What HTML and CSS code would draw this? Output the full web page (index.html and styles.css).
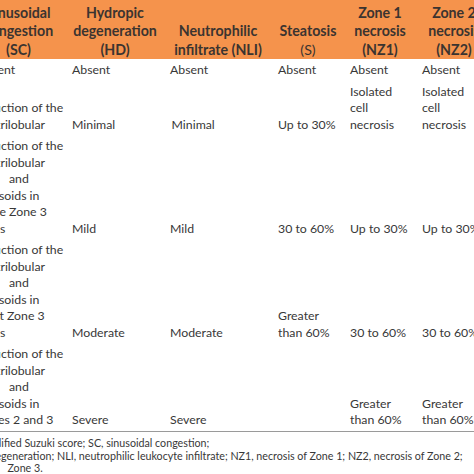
FILE: index.html
```html
<!DOCTYPE html>
<html lang="en">
<head>
<meta charset="utf-8">
<title>Modified Suzuki score</title>
<link rel="stylesheet" href="styles.css">
</head>
<body>
<div class="page">
  <table class="scores">
    <colgroup>
      <col class="c-sc"><col class="c-hd"><col class="c-nli"><col class="c-s"><col class="c-nz1"><col class="c-nz2">
    </colgroup>
    <thead>
      <tr>
        <th>Sinusoidal<br>congestion<br>(SC)</th>
        <th>Hydropic<br>degeneration<br>(HD)</th>
        <th>Neutrophilic<br>infiltrate (NLI)</th>
        <th>Steatosis<br><span class="reg">(S)</span></th>
        <th>Zone 1<br>necrosis<br>(NZ1)</th>
        <th>Zone 2<br>necrosis<br>(NZ2)</th>
      </tr>
    </thead>
    <tbody>
      <tr>
        <td>Absent</td><td>Absent</td><td>Absent</td><td>Absent</td><td>Absent</td><td>Absent</td>
      </tr>
      <tr>
        <td>Induction of the<br>centrilobular</td><td>Minimal</td><td>&#8201;Minimal</td><td>Up to 30%</td><td>Isolated<br>cell<br>necrosis</td><td>Isolated<br>cell<br>necrosis</td>
      </tr>
      <tr>
        <td>Induction of the<br>centrilobular<br>vein&nbsp;&nbsp; and<br>sinusoids in<br>some Zone 3<br>areas</td><td>Mild</td><td>Mild</td><td>30 to 60%</td><td>Up to 30%</td><td>Up to 30%</td>
      </tr>
      <tr>
        <td>Induction of the<br>centrilobular<br>vein&nbsp;&nbsp; and<br>sinusoids in<br>most Zone 3<br>areas</td><td>Moderate</td><td>Moderate</td><td>Greater<br>than 60%</td><td>30 to 60%</td><td>30 to 60%</td>
      </tr>
      <tr>
        <td>Induction of the<br>centrilobular<br>vein&nbsp;&nbsp; and<br>sinusoids in<br>Zones 2 and 3</td><td>Severe</td><td>Severe</td><td></td><td>Greater<br>than 60%</td><td>Greater<br>than 60%</td>
      </tr>
    </tbody>
  </table>
  <p class="note">
    <span class="line">Note: MSS, modified Suzuki score; SC, sinusoidal congestion;</span>
    <span class="line">HD, hydropic degeneration; NLI, neutrophilic leukocyte infiltrate; NZ1, necrosis of Zone 1; NZ2, necrosis of Zone 2;</span>
    <span class="line last">NZ3, necrosis of&emsp; Zone 3.</span>
  </p>
</div>
</body>
</html>
```

FILE: styles.css
```css
html, body {
  margin: 0;
  padding: 0;
  background: #ffffff;
  overflow: hidden;
}

body {
  width: 474px;
  height: 474px;
  font-family: Lato, "Liberation Sans", sans-serif;
  color: #383838;
}

.page {
  width: 474px;
  height: 474px;
  overflow: hidden;
}

.scores {
  border-collapse: collapse;
  table-layout: fixed;
  width: 521px;
  margin-left: -29px;
  border-bottom: 1px solid #9a9a9a;
}

.c-sc { width: 95px; }
.c-hd { width: 98px; }
.c-nli { width: 108px; }
.c-s { width: 72px; }
.c-nz1 { width: 72px; }
.c-nz2 { width: 76px; }

.scores th {
  background: #f5934c;
  color: #3b3430;
  font-weight: 700;
  font-size: 14.2px;
  line-height: 18.3px;
  text-align: center;
  vertical-align: bottom;
  padding: 4px 6px 0.5px;
  white-space: nowrap;
}

.scores th .reg {
  font-weight: 400;
}

.scores td {
  font-size: 12.3px;
  line-height: 16.5px;
  text-align: left;
  vertical-align: bottom;
  padding: 3px 6px 2px;
  white-space: nowrap;
}

.note {
  margin: 0 0 0 -75px;
  padding-top: 5.5px;
  font-size: 10.7px;
  line-height: 12.5px;
  white-space: nowrap;
}

.note .line {
  display: block;
}

.note .last {
  text-indent: -5px;
}
```
